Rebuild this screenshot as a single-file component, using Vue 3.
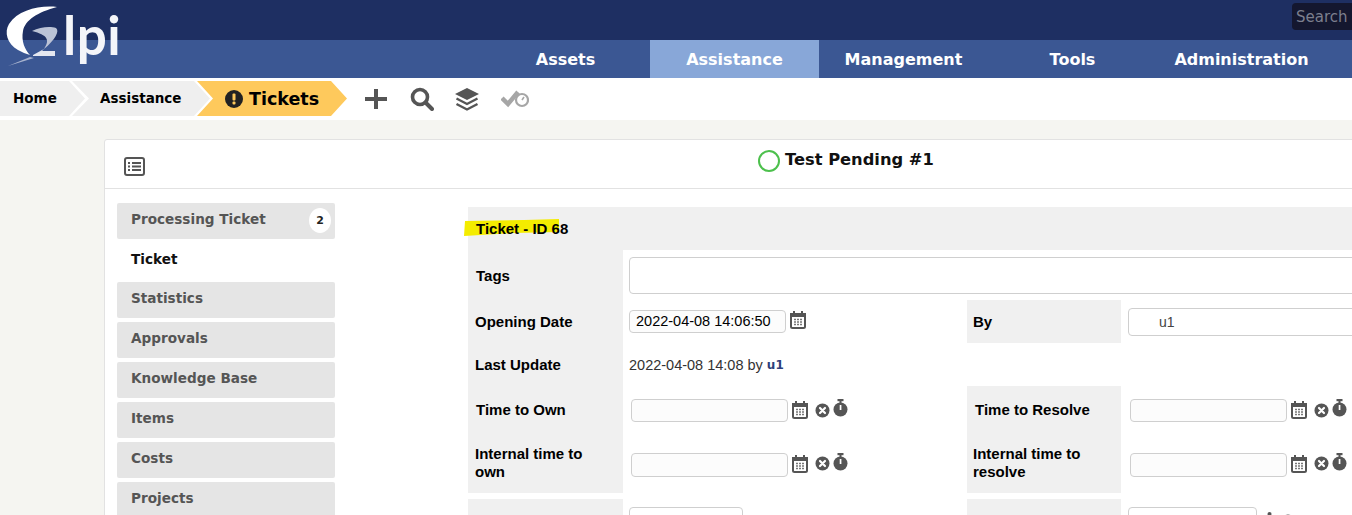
<script setup>
const navItems = ['Assets', 'Assistance', 'Management', 'Tools', 'Administration']
const tabs = [
  { label: 'Processing Ticket', badge: 2 },
  { label: 'Ticket', active: true },
  { label: 'Statistics' },
  { label: 'Approvals' },
  { label: 'Knowledge Base' },
  { label: 'Items' },
  { label: 'Costs' },
  { label: 'Projects' }
]
</script>

<template>
  <div class="page">
    <header class="head">
      <div class="top">
        <div class="search">Search</div>
      </div>
      <nav class="nav">
        <a v-for="n in navItems" :key="n" class="nav-item" :class="{ on: n === 'Assistance' }">{{ n }}</a>
      </nav>
      <div class="logo">
        <svg class="logo-g" width="70" height="70" viewBox="0 0 70 70">
          <path fill="#fff" d="M57 7C40 5 18 10 9 24C4 32 7 44 18 50C22 52 26 54 30 55C25 50 21 41 23 31C25 20 38 12 57 7Z"/>
          <path fill="#bcc3d6" d="M32 31C40 27 50 26 56 28C60 31 55 40 44 49C50 40 48 35 32 31Z"/>
          <path fill="#e4e7f0" d="M33 55L44 49L42 51L55 51L55 56L33 56Z"/>
          <path fill="#a9b4cf" d="M30 57L8 66L34 58Z"/>
        </svg>
        <span class="logo-t">lpi</span>
      </div>
    </header>

    <div class="crumbbar">
      <a class="crumb home">Home</a>
      <a class="crumb assist">Assistance</a>
      <a class="crumb tick">
        <svg width="18" height="18" viewBox="0 0 18 18"><circle cx="9" cy="9" r="9" fill="#222"/><rect x="7.500" y="3.500" width="3" height="7" rx="1" fill="#fec95c"/><rect x="7.500" y="11.500" width="3" height="3" rx="1" fill="#fec95c"/></svg>
        <span>Tickets</span>
      </a>
      <div class="actions">
        <svg width="22" height="20" viewBox="0 0 22 20"><path fill="#555" d="M9 0h4v8h9v4h-9v8H9v-8H0V8h9z"/></svg>
        <svg width="24" height="24" viewBox="0 0 24 24"><circle cx="10" cy="10" r="7.500" fill="none" stroke="#555" stroke-width="3.600"/><path d="M15.500 15.500L22 22" stroke="#555" stroke-width="4" stroke-linecap="round"/></svg>
        <svg width="24" height="24" viewBox="0 0 24 24"><path fill="#555" d="M12 1l12 6-12 6L0 7z"/><path d="M1.500 11.500L12 17l10.500-5.500M1.500 17L12 22.500 22.500 17" fill="none" stroke="#555" stroke-width="2.400"/></svg>
        <svg width="28" height="20" viewBox="0 0 28 20"><path d="M1 9l6 6L17 3" fill="none" stroke="#a6a6a6" stroke-width="4.500"/><circle cx="21" cy="11" r="6" fill="#fff" stroke="#a6a6a6" stroke-width="2.200"/><path d="M21 11l2-3" stroke="#a6a6a6" stroke-width="1.600"/></svg>
      </div>
    </div>

    <main class="main">
      <section class="card">
        <div class="card-head">
          <svg class="list-ic" width="21" height="19" viewBox="0 0 21 19"><rect x="1" y="1" width="19" height="17" rx="2" fill="none" stroke="#555" stroke-width="2"/><path d="M4 6h2M4 9.500h2M4 13h2M8 6h9M8 9.500h9M8 13h9" stroke="#555" stroke-width="1.800"/></svg>
          <div class="title"><i class="ring"></i><span>Test Pending #1</span></div>
        </div>
        <div class="card-body">
          <aside class="tabs">
            <a v-for="t in tabs" :key="t.label" class="tab" :class="{ active: t.active }">
              {{ t.label }}
              <b v-if="t.badge" class="badge">{{ t.badge }}</b>
            </a>
          </aside>

          <div class="form">
            <div class="form-title">
              <svg class="mark" width="96" height="18" viewBox="0 0 96 18"><path fill="#f4ec00" d="M1 3L60 2 95 1V14L50 15 0 18z"/></svg>
              <span>Ticket - ID 68</span>
            </div>
            <div class="grid g1">
              <div class="lab tags-l">Tags</div>
              <div class="tags-v"><div class="input tags-i"></div></div>

              <div class="lab od-l">Opening Date</div>
              <div class="val"><div class="input date">2022-04-08 14:06:50</div><svg class="cal" width="16" height="18" viewBox="0 0 16 18"><use href="#cal"/></svg></div>
              <div class="lab by-l r">By</div>
              <div class="val by-v"><div class="input by">u1</div></div>

              <div class="lab lu-l">Last Update</div>
              <div class="val lu">2022-04-08 14:08 by&nbsp;<b>u1</b></div>
              <div></div><div></div>

              <div class="lab t1">Time to Own</div>
              <div class="val v1"><div class="input dt"></div>
                <svg class="cal" width="16" height="18" viewBox="0 0 16 18"><use href="#cal"/></svg>
                <svg class="x" width="15" height="15" viewBox="0 0 15 15"><use href="#xc"/></svg>
                <svg class="sw" width="15" height="18" viewBox="0 0 15 18"><use href="#sw"/></svg>
              </div>
              <div class="lab t1 rt">Time to Resolve</div>
              <div class="val v1 vr"><div class="input dt"></div>
                <svg class="cal" width="16" height="18" viewBox="0 0 16 18"><use href="#cal"/></svg>
                <svg class="x" width="15" height="15" viewBox="0 0 15 15"><use href="#xc"/></svg>
                <svg class="sw" width="15" height="18" viewBox="0 0 15 18"><use href="#sw"/></svg>
              </div>

              <div class="lab t2">Internal time to<br>own</div>
              <div class="val v2"><div class="input dt"></div>
                <svg class="cal" width="16" height="18" viewBox="0 0 16 18"><use href="#cal"/></svg>
                <svg class="x" width="15" height="15" viewBox="0 0 15 15"><use href="#xc"/></svg>
                <svg class="sw" width="15" height="18" viewBox="0 0 15 18"><use href="#sw"/></svg>
              </div>
              <div class="lab t2 r">Internal time to<br>resolve</div>
              <div class="val v2 vr"><div class="input dt"></div>
                <svg class="cal" width="16" height="18" viewBox="0 0 16 18"><use href="#cal"/></svg>
                <svg class="x" width="15" height="15" viewBox="0 0 15 15"><use href="#xc"/></svg>
                <svg class="sw" width="15" height="18" viewBox="0 0 15 18"><use href="#sw"/></svg>
              </div>
            </div>
            <div class="grid g2">
              <div class="lab"></div>
              <div class="val pushed"><div class="input small"></div></div>
              <div class="lab"></div>
              <div class="val pushed rr"><div class="input mid"></div>
                <svg class="peek" width="28" height="12" viewBox="0 0 28 12"><circle cx="2.500" cy="5" r="2" fill="#555"/><rect x="1" y="8" width="3" height="4" fill="#555"/><circle cx="21" cy="12" r="6.500" fill="#555"/></svg>
              </div>
            </div>
          </div>
        </div>
      </section>
    </main>

    <svg class="defs" width="0" height="0">
      <defs>
        <g id="cal">
          <rect x="1" y="3" width="14" height="14" rx="1.500" fill="#fff" stroke="#555" stroke-width="2"/>
          <rect x="0" y="2" width="16" height="4" fill="#555"/>
          <rect x="3" y="0" width="2" height="4" fill="#555"/><rect x="11" y="0" width="2" height="4" fill="#555"/>
          <path d="M4 8.500h8M4 11h8M4 13.500h8" stroke="#777" stroke-width="1.500" stroke-dasharray="2 1"/>
        </g>
        <g id="xc">
          <circle cx="7.500" cy="7.500" r="7" fill="#555"/>
          <path d="M5 5l5 5M10 5l-5 5" stroke="#fff" stroke-width="2.200" stroke-linecap="round"/>
        </g>
        <g id="sw">
          <rect x="4.500" y="0" width="6" height="2.200" fill="#555"/><rect x="6.500" y="1" width="2" height="3" fill="#555"/>
          <circle cx="7.500" cy="10.500" r="7" fill="#555"/>
          <rect x="6.700" y="6" width="1.700" height="5" fill="#fff"/>
        </g>
      </defs>
    </svg>
  </div>
</template>

<style>
html, body { margin: 0; background: #f5f5f1; }
</style>

<style scoped>
.page { width: 1352px; height: 515px; overflow: hidden; position: relative; background: #f5f5f1; font-family: "Liberation Sans", Arial, sans-serif; color: #000; }
.head { position: relative; }
.top { height: 40px; background: #1e2f62; display: flex; justify-content: flex-end; align-items: flex-start; }
.search { width: 60px; height: 27px; margin-top: 3px; background: #14172f; border-radius: 4px 0 0 4px; color: #7c7f8e; font: 15px/28px "DejaVu Sans", sans-serif; padding-left: 4px; box-sizing: border-box; overflow: hidden; }
.nav { height: 38px; background: #3b5793; display: flex; justify-content: flex-end; padding-right: 26px; }
.nav-item { width: 169px; text-align: center; color: #fff; font: bold 16px/40px "DejaVu Sans", sans-serif; }
.nav-item.on { background: #88a7d8; }
.logo { position: absolute; left: 0; top: 0; }
.logo-g { display: block; }
.logo-t { color: #f4f5f9; font: 700 53px/56px "Lato", sans-serif; position: absolute; left: 63px; top: 7px; letter-spacing: 0.500px; }

.crumbbar { height: 42px; background: #fff; display: flex; align-items: flex-start; padding-top: 3px; box-sizing: border-box; }
.crumb { height: 35px; display: flex; align-items: center; gap: 6px; font: bold 13.500px/35px "DejaVu Sans", sans-serif; background: #efefef; box-sizing: border-box; flex: none; }
.home { width: 85px; padding-left: 13px; clip-path: polygon(0 0, 69px 0, 100% 50%, 69px 100%, 0 100%); }
.assist { width: 138px; margin-left: -13px; padding-left: 28px; clip-path: polygon(0 0, 122px 0, 100% 50%, 122px 100%, 0 100%, 17px 50%); }
.tick { width: 150px; margin-left: -13px; padding: 1px 0 0 28px; background: #fec95c; font-size: 17.500px; clip-path: polygon(0 0, 134px 0, 100% 50%, 134px 100%, 0 100%, 16px 50%); }
.actions { display: flex; align-items: center; height: 35px; margin-left: 18px; gap: 21px; }
.actions svg:nth-child(2) { margin-left: 2px; }
.actions svg:nth-child(4) { margin-left: 1px; }

.main { padding: 19px 0 0 104px; }
.card { width: 1300px; background: #fff; border: 1px solid #e2e2e2; border-radius: 3px 0 0 0; box-sizing: border-box; }
.card-head { height: 48px; position: relative; border-bottom: 1px solid #e2e2e2; display: flex; align-items: center; padding-left: 19px; }
.list-ic { position: relative; top: 2px; }
.title { position: absolute; left: 653px; top: 9px; display: flex; align-items: center; gap: 5px; font: bold 16.300px/22px "DejaVu Sans", sans-serif; color: #111; }
.ring { display: block; width: 22px; height: 22px; box-sizing: border-box; border: 2px solid #4cc04c; border-radius: 50%; position: relative; top: 1px; }
.card-body { display: flex; padding: 14px 0 0 12px; }
.tabs { width: 218px; flex: none; display: flex; flex-direction: column; gap: 4px; }
.tab { height: 36px; box-sizing: border-box; padding-left: 14px; background: #e5e5e5; border-radius: 2px; color: #555; font: bold 13.600px/32px "DejaVu Sans", sans-serif; position: relative; }
.tab.active { background: #fff; color: #111; height: 35px; line-height: 32px; }
.badge { position: absolute; right: 4px; top: 5px; width: 22px; height: 25px; background: #fff; border-radius: 50%; color: #222; font: bold 11px/25px "DejaVu Sans", sans-serif; text-align: center; }

.form { margin-left: 133px; width: 884px; flex: none; padding-top: 4px; }
.form-title { height: 43px; background: #f0f0f0; font: bold 15px/43px "Liberation Sans", sans-serif; padding-left: 8px; position: relative; }
.form-title span { position: relative; }
.mark { position: absolute; left: -4px; top: 11px; }
.grid { display: grid; grid-template-columns: 155px 344px 154px 231px; }
.lab { background: #f0f0f0; font: bold 15px/18px "Liberation Sans", sans-serif; display: flex; align-items: center; padding-left: 7px; box-sizing: border-box; }
.lab.r { padding-left: 6px; }
.lab.rt { padding-left: 8px; }
.val { display: flex; align-items: center; }
.tags-l { height: 50px; padding-left: 8px; padding-top: 2px; }
.tags-v { grid-column: 2 / 5; padding: 7px 0 0 6px; }
.input { border: 1px solid #cfcfcf; border-radius: 4px; box-sizing: border-box; background: #fff; }
.tags-i { width: 900px; height: 37px; }
.od-l { height: 43px; }
.date { width: 157px; height: 23px; margin-left: 6px; font: 14.500px/21px "Liberation Sans", sans-serif; padding-left: 6px; background: #fcfcfc; }
.cal { margin-left: 4px; flex: none; }
.date + .cal { margin-top: -4px; }
.by-l { height: 43px; }
.by-v { padding-left: 7px; }
.by { width: 400px; height: 28px; font: 14px/26px "Liberation Sans", sans-serif; padding-left: 30px; color: #444; flex: none; }
.lu-l { height: 43px; }
.lu { padding-left: 6px; font-size: 14.500px; color: #333; }
.lu b { color: #2d3f7c; font: bold 12px "DejaVu Sans", sans-serif; }
.t1 { height: 46px; padding-left: 8px; padding-top: 2px; }
.t2 { height: 61px; }
.v1 { padding-top: 2px; }
.v2 { padding-top: 4px; }
.dt { width: 157px; height: 23px; margin-left: 8px; background: #fcfcfc; }
.v2 .dt { height: 24px; }
.vr .dt { margin-left: 9px; }
.x { margin-left: 7px; }
.sw { margin-left: 3px; position: relative; top: -2px; }
.v2 svg { transform: translateY(-1px); }
.g2 { margin-top: 6px; }
.g2 .lab { height: 40px; }
.val.pushed { align-items: flex-start; padding-top: 8px; }
.small { width: 114px; height: 30px; margin-left: 6px; }
.mid { width: 129px; height: 30px; margin-left: 7px; flex: none; }
.rr .peek { margin-left: 10px; margin-top: 2px; }
.defs { position: absolute; }
</style>
